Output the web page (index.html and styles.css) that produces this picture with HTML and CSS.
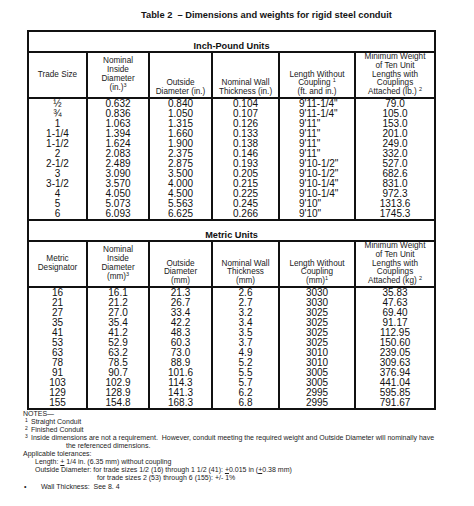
FILE: index.html
```html
<!DOCTYPE html>
<html>
<head>
<meta charset="utf-8">
<title>Table 2 – Dimensions and weights for rigid steel conduit</title>
<link rel="stylesheet" href="styles.css">
</head>
<body>
<h1 class="title">Table 2&nbsp; – Dimensions and weights for rigid steel conduit</h1>
<table class="conduit">
  <colgroup>
    <col class="w1"><col class="w2"><col class="w3"><col class="w4"><col class="w5"><col class="w6">
  </colgroup>
  <tbody>
    <tr class="section"><th colspan="6">Inch-Pound Units</th></tr>
    <tr class="head">
      <th class="mid">Trade Size</th>
      <th class="mid">Nominal<br>Inside<br>Diameter<br>(in.)<sup>3</sup></th>
      <th>Outside<br>Diameter (in.)</th>
      <th>Nominal Wall<br>Thickness (in.)</th>
      <th>Length Without<br>Coupling <sup>1</sup><br>(ft. and in.)</th>
      <th>Minimum Weight<br>of Ten Unit<br>Lengths with<br>Couplings<br>Attached (lb.) <sup>2</sup></th>
    </tr>
    <tr class="data"><td>½</td><td>0.632</td><td>0.840</td><td>0.104</td><td class="len">9'11-1/4"</td><td>79.0</td></tr>
    <tr class="data"><td>¾</td><td>0.836</td><td>1.050</td><td>0.107</td><td class="len">9'11-1/4"</td><td>105.0</td></tr>
    <tr class="data"><td>1</td><td>1.063</td><td>1.315</td><td>0.126</td><td class="len">9'11"</td><td>153.0</td></tr>
    <tr class="data"><td>1-1/4</td><td>1.394</td><td>1.660</td><td>0.133</td><td class="len">9'11"</td><td>201.0</td></tr>
    <tr class="data"><td>1-1/2</td><td>1.624</td><td>1.900</td><td>0.138</td><td class="len">9'11"</td><td>249.0</td></tr>
    <tr class="data"><td>2</td><td>2.083</td><td>2.375</td><td>0.146</td><td class="len">9'11"</td><td>332.0</td></tr>
    <tr class="data"><td>2-1/2</td><td>2.489</td><td>2.875</td><td>0.193</td><td class="len">9'10-1/2"</td><td>527.0</td></tr>
    <tr class="data"><td>3</td><td>3.090</td><td>3.500</td><td>0.205</td><td class="len">9'10-1/2"</td><td>682.6</td></tr>
    <tr class="data"><td>3-1/2</td><td>3.570</td><td>4.000</td><td>0.215</td><td class="len">9'10-1/4"</td><td>831.0</td></tr>
    <tr class="data"><td>4</td><td>4.050</td><td>4.500</td><td>0.225</td><td class="len">9'10-1/4"</td><td>972.3</td></tr>
    <tr class="data"><td>5</td><td>5.073</td><td>5.563</td><td>0.245</td><td class="len">9'10"</td><td>1313.6</td></tr>
    <tr class="data"><td>6</td><td>6.093</td><td>6.625</td><td>0.266</td><td class="len">9'10"</td><td>1745.3</td></tr>
    <tr class="section"><th colspan="6">Metric Units</th></tr>
    <tr class="head">
      <th class="mid">Metric<br>Designator</th>
      <th class="mid">Nominal<br>Inside<br>Diameter<br>(mm)<sup>3</sup></th>
      <th>Outside<br>Diameter<br>(mm)</th>
      <th>Nominal Wall<br>Thickness<br>(mm)</th>
      <th>Length Without<br>Coupling<br>(mm)<sup>1</sup></th>
      <th>Minimum Weight<br>of Ten Unit<br>Lengths with<br>Couplings<br>Attached (kg) <sup>2</sup></th>
    </tr>
    <tr class="data"><td>16</td><td>16.1</td><td>21.3</td><td>2.6</td><td>3030</td><td>35.83</td></tr>
    <tr class="data"><td>21</td><td>21.2</td><td>26.7</td><td>2.7</td><td>3030</td><td>47.63</td></tr>
    <tr class="data"><td>27</td><td>27.0</td><td>33.4</td><td>3.2</td><td>3025</td><td>69.40</td></tr>
    <tr class="data"><td>35</td><td>35.4</td><td>42.2</td><td>3.4</td><td>3025</td><td>91.17</td></tr>
    <tr class="data"><td>41</td><td>41.2</td><td>48.3</td><td>3.5</td><td>3025</td><td>112.95</td></tr>
    <tr class="data"><td>53</td><td>52.9</td><td>60.3</td><td>3.7</td><td>3025</td><td>150.60</td></tr>
    <tr class="data"><td>63</td><td>63.2</td><td>73.0</td><td>4.9</td><td>3010</td><td>239.05</td></tr>
    <tr class="data"><td>78</td><td>78.5</td><td>88.9</td><td>5.2</td><td>3010</td><td>309.63</td></tr>
    <tr class="data"><td>91</td><td>90.7</td><td>101.6</td><td>5.5</td><td>3005</td><td>376.94</td></tr>
    <tr class="data"><td>103</td><td>102.9</td><td>114.3</td><td>5.7</td><td>3005</td><td>441.04</td></tr>
    <tr class="data"><td>129</td><td>128.9</td><td>141.3</td><td>6.2</td><td>2995</td><td>595.85</td></tr>
    <tr class="data"><td>155</td><td>154.8</td><td>168.3</td><td>6.8</td><td>2995</td><td>791.67</td></tr>
  </tbody>
</table>
<div class="notes">
  <div class="notes-title">NOTES—</div>
  <div class="note"><span class="mark">1</span>Straight Conduit</div>
  <div class="note"><span class="mark">2</span>Finished Conduit</div>
  <div class="note"><span class="mark">3</span>Inside dimensions are not a requirement.&nbsp; However, conduit meeting the required weight and Outside Diameter will nominally have</div>
  <div class="note-cont">the referenced dimensions.</div>
  <div class="tol-title">Applicable tolerances:</div>
  <div class="tol">Length: <u>+</u> 1/4 in. (6.35 mm) without coupling</div>
  <div class="tol">Outside Diameter: for trade sizes 1/2 (16) through 1 1/2 (41): <u>+</u>0.015 in (<u>+</u>0.38 mm)</div>
  <div class="tol-cont">for trade sizes 2 (53) through 6 (155): +/- 1%</div>
  <div class="bullet"><span class="dot">•</span>Wall Thickness:&nbsp; See 8. 4</div>
</div>
<div class="frame"></div>
</body>
</html>
```

FILE: styles.css
```css
html, body {
  margin: 0;
  padding: 0;
  background: #ffffff;
}

body {
  width: 474px;
  height: 506px;
  overflow: hidden;
  color: #161616;
  font-family: "Liberation Sans", Arial, sans-serif;
}

.title {
  margin: 10px 0 0;
  padding-left: 141px;
  font-size: 9.3px;
  line-height: 11px;
  font-weight: bold;
  color: #141414;
}

.conduit {
  margin: 9px 0 0 27px;
  width: 407px;
  table-layout: fixed;
  border-collapse: collapse;
  border: 2px solid #111;
}

.w1 { width: 59px; }
.w2 { width: 62px; }
.w3 { width: 63px; }
.w4 { width: 67px; }
.w5 { width: 76px; }
.w6 { width: 80px; }

.conduit th,
.conduit td {
  padding: 0;
  border: 2px solid #111;
  text-align: center;
  font-weight: normal;
  overflow: hidden;
  white-space: nowrap;
}

.section th {
  height: 19px;
  vertical-align: bottom;
  font-size: 9.2px;
  line-height: 10px;
  font-weight: bold;
  color: #111;
}

.head th {
  height: 44px;
  vertical-align: bottom;
  font-size: 8.2px;
  line-height: 8.8px;
  color: #222;
}

.head th.mid {
  vertical-align: middle;
}

.head sup {
  font-size: 5.5px;
  line-height: 0;
  vertical-align: 3px;
}

.data td {
  border-top: none;
  border-bottom: none;
  height: 10px;
  font-size: 10px;
  line-height: 10px;
  color: #111;
}

.data td.len {
  text-align: left;
  padding-left: 19px;
}

.notes {
  margin-left: 23px;
  font-size: 7px;
  line-height: 8px;
  color: #1c1c1c;
  white-space: nowrap;
}

.note {
  padding-left: 8px;
}

.note-cont {
  padding-left: 43px;
}

.mark {
  display: inline-block;
  width: 8px;
  margin-left: -6px;
  margin-right: -2px;
  font-size: 5px;
  line-height: 0;
  vertical-align: 2px;
}

.tol {
  padding-left: 12px;
}

.tol-cont {
  padding-left: 74px;
}

.bullet {
  padding-top: 1px;
}

.dot {
  display: inline-block;
  width: 17px;
  padding-left: 1px;
}

.frame {
  margin-top: 16px;
  margin-left: 1px;
  width: 471px;
  height: 8px;
  border-left: 1px solid #9a9a9a;
  border-right: 1px solid #9a9a9a;
}
```
